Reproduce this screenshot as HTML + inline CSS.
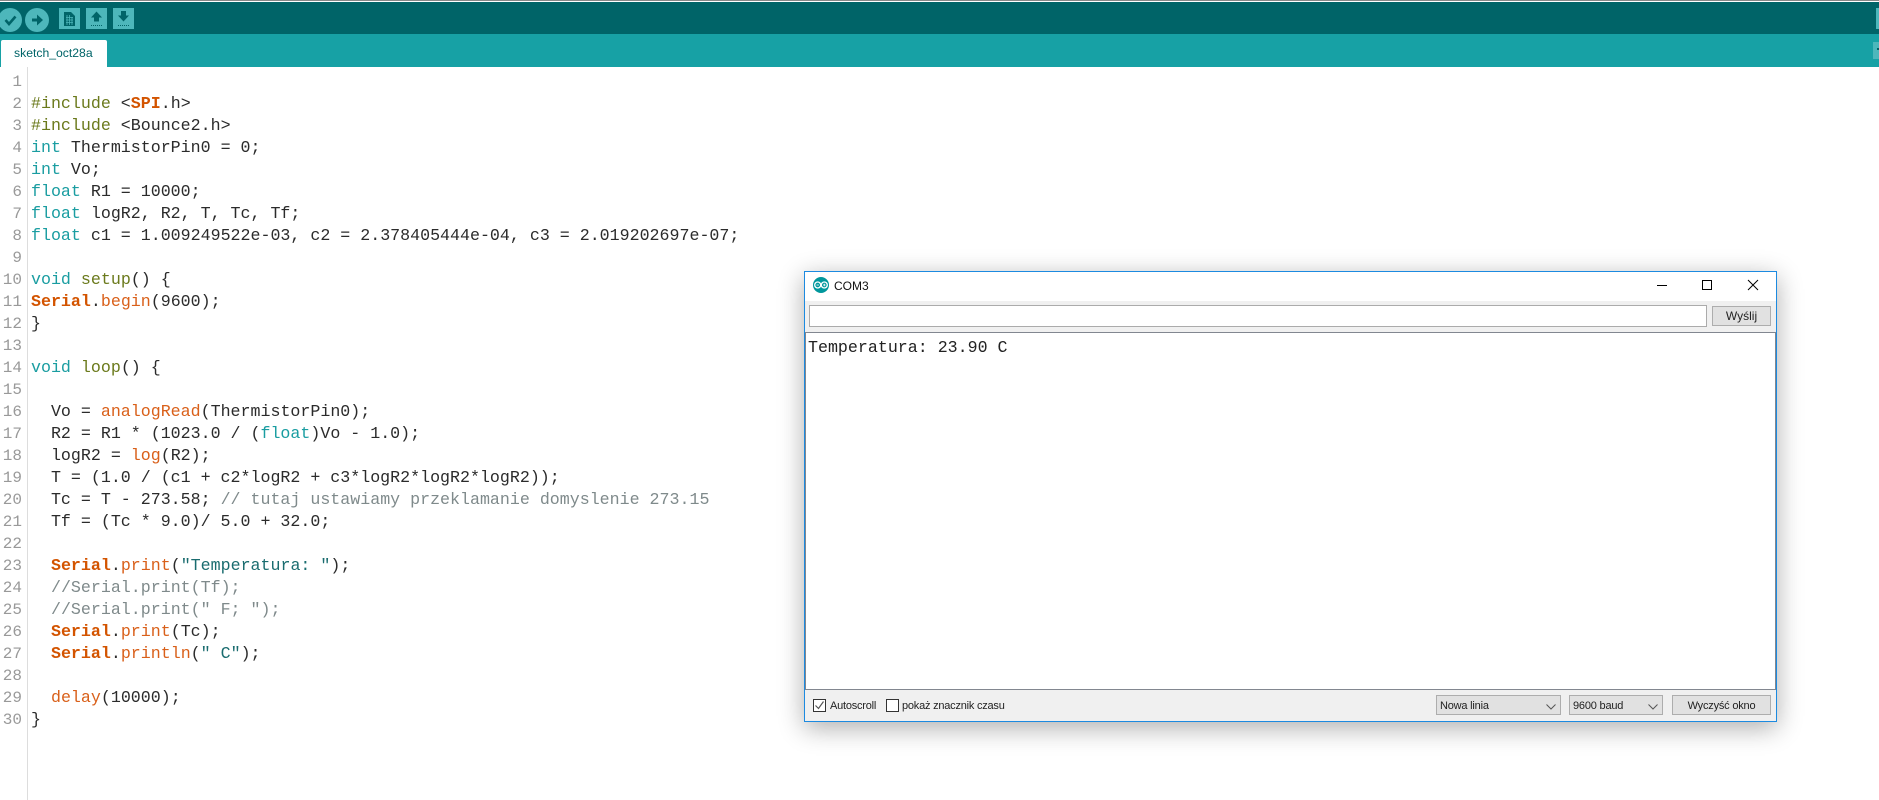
<!DOCTYPE html>
<html><head><meta charset="utf-8"><title>sketch_oct28a</title>
<style>
html,body{margin:0;padding:0;background:#fff;}
body{position:relative;width:1879px;height:800px;overflow:hidden;font-family:"Liberation Sans",sans-serif;}
.a{position:absolute;}
pre{margin:0;font-family:"Liberation Mono",monospace;font-size:16.64px;line-height:22px;color:#2b2b2b;}
.k{color:#1a9da1}.i{color:#6b7a1c}.o{color:#D9601a}.b{color:#D35400;font-weight:bold}.s{color:#1a6c6f}.c{color:#7f8a8b}
.ui{font-size:11px;letter-spacing:-.22px;color:#222;line-height:16px;white-space:nowrap;}
.btn{position:absolute;background:#e1e1e1;border:1px solid #adadad;box-sizing:border-box;font-size:11px;letter-spacing:-.2px;color:#222;text-align:center;white-space:nowrap;}
.cb{position:absolute;width:13px;height:13px;border:1px solid #333;box-sizing:border-box;background:#fff;}
</style></head><body>
<div class="a" style="left:0;top:0;width:1879px;height:2px;background:#fff;border-top:0"></div>
<div class="a" style="left:0;top:0;width:1879px;height:1px;background:#888"></div>
<div class="a" style="left:0;top:2px;width:1879px;height:32px;background:#006468"></div>
<div class="a" style="left:0;top:34px;width:1879px;height:33px;background:#17A1A5"></div>
<svg class="a" style="left:0;top:0" width="140" height="34" viewBox="0 0 140 34">
<circle cx="10" cy="20" r="12" fill="#4DB7BB"/>
<path d="M5.5 20 L9 24 L15.5 16.5" fill="none" stroke="#006468" stroke-width="2.6"/>
<circle cx="37" cy="20" r="12" fill="#4DB7BB"/>
<path d="M32 18.500h5v-4l6 5.500l-6 5.500v-4h-5z" fill="#006468"/>
<rect x="59" y="8" width="21" height="21" fill="#4DB7BB"/>
<path d="M64 12h7l4 4v10h-11z" fill="#006468"/>
<path d="M66 17.500h7M66 20h7M66 22.500h7M67 15v10M69.500 15v10M72 17v8" stroke="#4DB7BB" stroke-width=".8" fill="none"/>
<rect x="86" y="8" width="21" height="21" fill="#4DB7BB"/>
<path d="M96.500 11.500l5.500 6h-3v4h-5v-4h-3z" fill="#006468"/>
<path d="M91 25.500h11" stroke="#006468" stroke-width="1" stroke-dasharray="1 1"/>
<rect x="113" y="8" width="21" height="21" fill="#4DB7BB"/>
<path d="M121 11h5v4.500h3l-5.500 6l-5.500-6h3z" fill="#006468"/>
<path d="M118 25.500h11" stroke="#006468" stroke-width="1" stroke-dasharray="1 1"/>
</svg>
<div class="a" style="left:1876px;top:8px;width:3px;height:21px;background:#4DB7BB"></div>
<div class="a" style="left:1873px;top:42px;width:6px;height:17px;background:#4DB7BB"></div>
<div class="a" style="left:1877px;top:48px;width:2px;height:2px;background:#006468"></div>
<div class="a" style="left:1px;top:40px;width:106px;height:27px;background:#fff;border-radius:2px 2px 0 0"></div>
<div class="a" style="left:14px;top:45px;font-size:12.2px;line-height:16px;color:#006468;white-space:nowrap">sketch_oct28a</div>
<div class="a" style="left:27px;top:67px;width:1px;height:733px;background:#ddd"></div>
<pre class="a" style="left:0;top:71px;width:22px;text-align:right;color:#999;font-size:16px">1
2
3
4
5
6
7
8
9
10
11
12
13
14
15
16
17
18
19
20
21
22
23
24
25
26
27
28
29
30</pre>
<pre class="a" style="left:31px;top:71px">

<span class="i">#include</span> &lt;<span class="b">SPI</span>.h&gt;
<span class="i">#include</span> &lt;Bounce2.h&gt;
<span class="k">int</span> ThermistorPin0 = 0;
<span class="k">int</span> Vo;
<span class="k">float</span> R1 = 10000;
<span class="k">float</span> logR2, R2, T, Tc, Tf;
<span class="k">float</span> c1 = 1.009249522e-03, c2 = 2.378405444e-04, c3 = 2.019202697e-07;

<span class="k">void</span> <span class="i">setup</span>() {
<span class="b">Serial</span>.<span class="o">begin</span>(9600);
}

<span class="k">void</span> <span class="i">loop</span>() {

  Vo = <span class="o">analogRead</span>(ThermistorPin0);
  R2 = R1 * (1023.0 / (<span class="k">float</span>)Vo - 1.0);
  logR2 = <span class="o">log</span>(R2);
  T = (1.0 / (c1 + c2*logR2 + c3*logR2*logR2*logR2));
  Tc = T - 273.58; <span class="c">// tutaj ustawiamy przeklamanie domyslenie 273.15</span>
  Tf = (Tc * 9.0)/ 5.0 + 32.0;

  <span class="b">Serial</span>.<span class="o">print</span>(<span class="s">"Temperatura: "</span>);
  <span class="c">//Serial.print(Tf);</span>
  <span class="c">//Serial.print(" F; ");</span>
  <span class="b">Serial</span>.<span class="o">print</span>(Tc);
  <span class="b">Serial</span>.<span class="o">println</span>(<span class="s">" C"</span>);

  <span class="o">delay</span>(10000);
}</pre>

<div class="a" style="left:804px;top:271px;width:973px;height:451px;box-sizing:border-box;border:1px solid #1c8ae0;background:#f0f0f0;box-shadow:0 6px 24px rgba(0,0,0,.32)"></div>
<div class="a" style="left:805px;top:272px;width:971px;height:29px;background:#fff"></div>
<svg class="a" style="left:813px;top:277px" width="16" height="16" viewBox="0 0 16 16">
<circle cx="8" cy="8" r="8" fill="#00979C"/>
<ellipse cx="4.700" cy="8" rx="3" ry="3" fill="none" stroke="#fff" stroke-width="1.300"/>
<ellipse cx="11.300" cy="8" rx="3" ry="3" fill="none" stroke="#fff" stroke-width="1.300"/>
<path d="M3.500 8h2.400M10 8h2.600M11.300 6.800v2.400" stroke="#fff" stroke-width=".8"/>
</svg>
<div class="a" style="left:834px;top:278px;font-size:12px;line-height:16px;color:#111;white-space:nowrap">COM3</div>
<svg class="a" style="left:1650px;top:272px" width="120" height="28" viewBox="0 0 120 28" fill="none" stroke="#000" stroke-width="1">
<path d="M7 13.500h10"/>
<rect x="52.500" y="8.500" width="9" height="9"/>
<path d="M98 8l10 10M108 8l-10 10"/>
</svg>
<div class="a" style="left:809px;top:305px;width:898px;height:22px;box-sizing:border-box;border:1px solid #ababab;background:#fff"></div>
<div class="btn" style="left:1712px;top:306px;width:59px;height:20px;line-height:18px;font-size:12px;letter-spacing:0">Wyślij</div>
<div class="a" style="left:805px;top:332px;width:971px;height:358px;box-sizing:border-box;background:#fff;border:1px solid #828790"></div>
<pre class="a" style="left:808px;top:337px;color:#222">Temperatura: 23.90 C</pre>
<div class="cb" style="left:813px;top:699px"></div>
<svg class="a" style="left:813px;top:699px" width="13" height="13" viewBox="0 0 13 13"><path d="M2.500 6.500l3 3l5-7" fill="none" stroke="#555" stroke-width="1.200"/></svg>
<div class="a ui" style="left:830px;top:698px">Autoscroll</div>
<div class="cb" style="left:886px;top:699px"></div>
<div class="a ui" style="left:902px;top:698px">pokaż znacznik czasu</div>
<div class="btn" style="left:1436px;top:695px;width:125px;height:20px;line-height:20px;text-align:left;padding-left:3px">Nowa linia</div>
<div class="btn" style="left:1569px;top:695px;width:94px;height:20px;line-height:20px;text-align:left;padding-left:3px">9600 baud</div>
<svg class="a" style="left:1436px;top:695px" width="240" height="20" viewBox="0 0 240 20" fill="none" stroke="#555" stroke-width="1"><path d="M110.500 9.500l4.500 4.500L119.500 9.500M212.500 9.500l4.500 4.500L221.500 9.500"/></svg>
<div class="btn" style="left:1672px;top:695px;width:99px;height:20px;line-height:20px">Wyczyść okno</div>
</body></html>
